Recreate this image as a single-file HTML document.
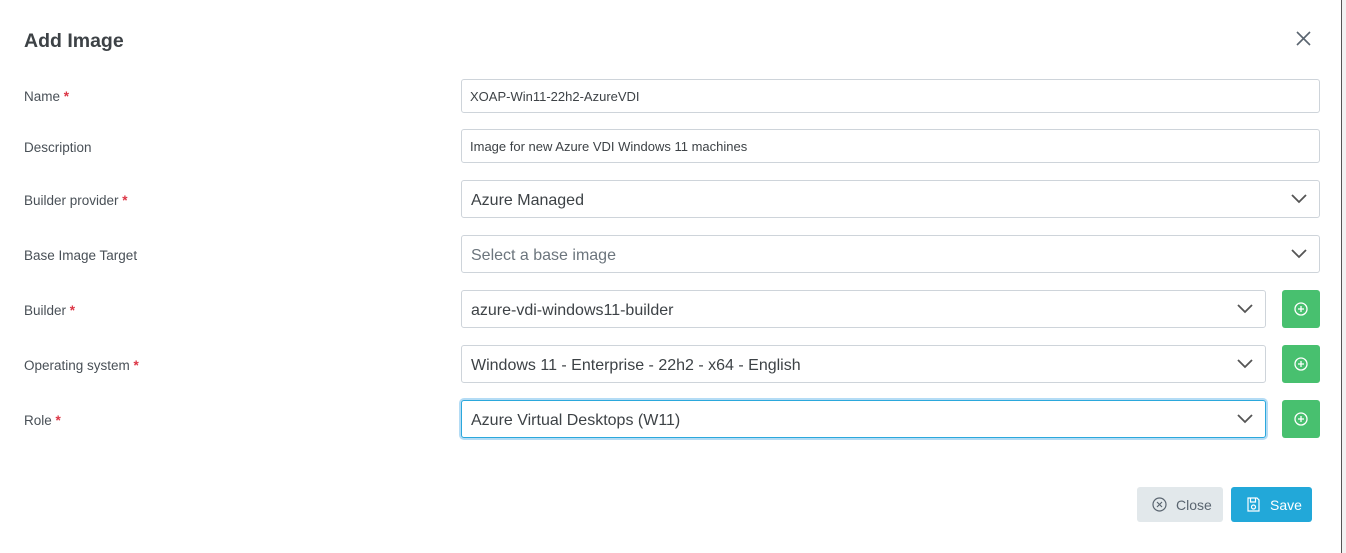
<!DOCTYPE html>
<html><head><style>
*{box-sizing:border-box;margin:0;padding:0}
body{width:1346px;height:553px;background:#fff;font-family:"Liberation Sans",sans-serif;position:relative;overflow:hidden;color:#495057}
.edge{position:absolute;left:1341px;top:0;width:1px;height:553px;background:#555}
.edge2{position:absolute;left:1342px;top:0;width:4px;height:553px;background:#f2f2f2}
h1{position:absolute;left:24px;top:30px;font-size:19.5px;font-weight:bold;color:#3d4246}
.x{position:absolute;left:1296px;top:31px}
.lbl{position:absolute;left:24px;font-size:13.5px;color:#495057}
.lbl b{color:#dc3545;font-weight:bold}
.in{position:absolute;left:461px;border:1px solid #ced4da;border-radius:3px;background:#fff;color:#3d4246;display:flex;align-items:center;padding-left:8px}
.sm{height:34px;width:859px;font-size:13px;padding-top:1px}
.sel{height:38px;font-size:16px;padding-left:9px;padding-top:3px}
.chev{position:absolute;right:12px;top:13px}
.g{position:absolute;left:1282px;width:38px;height:38px;background:#48c06f;border-radius:3px;display:flex;align-items:center;justify-content:center}
.btn{position:absolute;top:487px;height:35px;border-radius:3px;display:flex;align-items:center;font-size:14px}
</style></head><body>
<div class="edge"></div><div class="edge2"></div>
<h1>Add Image</h1>
<svg class="x" width="15" height="15" viewBox="0 0 15 15"><path d="M1 1L14 14M14 1L1 14" stroke="#5a6570" stroke-width="1.6"/></svg>

<div class="lbl" style="top:89px">Name <b>*</b></div>
<div class="in sm" style="top:79px">XOAP-Win11-22h2-AzureVDI</div>
<div class="lbl" style="top:140px">Description</div>
<div class="in sm" style="top:129px">Image for new Azure VDI Windows 11 machines</div>

<div class="lbl" style="top:193px">Builder provider <b>*</b></div>
<div class="in sel" style="top:180px;width:859px">Azure Managed<svg class="chev" width="16" height="10" viewBox="0 0 16 10"><path d="M1 1L8 8L15 1" stroke="#555" stroke-width="1.8" fill="none"/></svg></div>
<div class="lbl" style="top:248px">Base Image Target</div>
<div class="in sel" style="top:235px;width:859px;color:#6c757d">Select a base image<svg class="chev" width="16" height="10" viewBox="0 0 16 10"><path d="M1 1L8 8L15 1" stroke="#555" stroke-width="1.8" fill="none"/></svg></div>

<div class="lbl" style="top:303px">Builder <b>*</b></div>
<div class="in sel" style="top:290px;width:805px">azure-vdi-windows11-builder<svg class="chev" width="16" height="10" viewBox="0 0 16 10"><path d="M1 1L8 8L15 1" stroke="#555" stroke-width="1.8" fill="none"/></svg></div>
<div class="g" style="top:290px"><svg width="14" height="14" viewBox="0 0 14 14"><circle cx="7" cy="7" r="6" fill="none" stroke="#fff" stroke-width="1.3"/><path d="M7 4V10M4 7H10" stroke="#fff" stroke-width="1.3"/></svg></div>

<div class="lbl" style="top:358px">Operating system <b>*</b></div>
<div class="in sel" style="top:345px;width:805px">Windows 11 - Enterprise - 22h2 - x64 - English<svg class="chev" width="16" height="10" viewBox="0 0 16 10"><path d="M1 1L8 8L15 1" stroke="#555" stroke-width="1.8" fill="none"/></svg></div>
<div class="g" style="top:345px"><svg width="14" height="14" viewBox="0 0 14 14"><circle cx="7" cy="7" r="6" fill="none" stroke="#fff" stroke-width="1.3"/><path d="M7 4V10M4 7H10" stroke="#fff" stroke-width="1.3"/></svg></div>

<div class="lbl" style="top:413px">Role <b>*</b></div>
<div class="in sel" style="top:400px;width:805px;border-color:#2ba8dc;box-shadow:0 0 0 2px #b4dcf5">Azure Virtual Desktops (W11)<svg class="chev" width="16" height="10" viewBox="0 0 16 10"><path d="M1 1L8 8L15 1" stroke="#555" stroke-width="1.8" fill="none"/></svg></div>
<div class="g" style="top:400px"><svg width="14" height="14" viewBox="0 0 14 14"><circle cx="7" cy="7" r="6" fill="none" stroke="#fff" stroke-width="1.3"/><path d="M7 4V10M4 7H10" stroke="#fff" stroke-width="1.3"/></svg></div>

<div class="btn" style="left:1137px;width:86px;background:#e2e8eb;color:#5a6570;padding-left:15px">
<svg width="15" height="15" viewBox="0 0 15 15" style="margin-right:9px"><circle cx="7.5" cy="7.5" r="6.5" fill="none" stroke="#5a6570" stroke-width="1.2"/><path d="M5 5L10 10M10 5L5 10" stroke="#5a6570" stroke-width="1.2"/></svg>Close</div>
<div class="btn" style="left:1231px;width:81px;background:#22a8d9;color:#fff;padding-left:16px">
<svg width="13" height="15" viewBox="0 0 13 15" style="margin-right:10px"><path d="M1 1H10L12 3V14H1Z" fill="none" stroke="#fff" stroke-width="1.2"/><path d="M3.5 1V5H8.5V1" fill="none" stroke="#fff" stroke-width="1.2"/><circle cx="6.5" cy="10" r="2" fill="none" stroke="#fff" stroke-width="1.2"/></svg>Save</div>
</body></html>
